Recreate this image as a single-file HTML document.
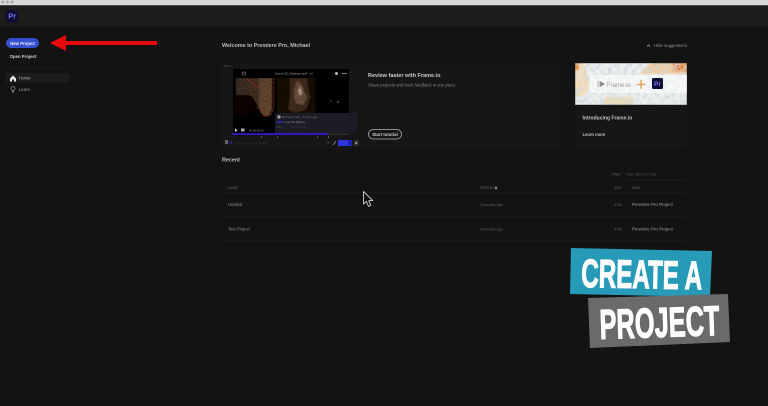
<!DOCTYPE html>
<html><head><meta charset="utf-8"><title>Premiere Pro</title>
<style>
html,body{margin:0;padding:0;background:#131313;width:768px;height:406px;overflow:hidden}
svg{display:block;position:absolute;left:0;top:0}
text{font-family:"Liberation Sans",sans-serif}
</style></head><body>
<svg width="768" height="406" viewBox="0 0 768 406" xmlns="http://www.w3.org/2000/svg">
<defs>
<filter id="b" x="-2%" y="-2%" width="104%" height="104%"><feGaussianBlur stdDeviation="0.28"/></filter>
<filter id="tex" x="0" y="0" width="100%" height="100%">
<feTurbulence type="fractalNoise" baseFrequency="0.6" numOctaves="2" seed="4" result="n"/>
<feColorMatrix in="n" type="matrix" values="0 0 0 0 0  0 0 0 0 0  0 0 0 0 0  1.200 0 0 0 -0.350" result="m"/>
<feComposite in="m" in2="SourceGraphic" operator="in" result="c"/>
<feMerge><feMergeNode in="SourceGraphic"/><feMergeNode in="c"/></feMerge>
<feGaussianBlur stdDeviation="0.5"/>
</filter>
<filter id="tex2" x="0" y="0" width="100%" height="100%">
<feTurbulence type="fractalNoise" baseFrequency="0.25" numOctaves="3" seed="9" result="n"/>
<feColorMatrix in="n" type="matrix" values="0 0 0 0 .62  0 0 0 0 .68  0 0 0 0 .7  2.200 0 0 0 -0.800" result="m"/>
<feComposite in="m" in2="SourceGraphic" operator="in" result="c"/>
<feMerge><feMergeNode in="SourceGraphic"/><feMergeNode in="c"/></feMerge>
<feGaussianBlur stdDeviation="0.4"/>
</filter>
</defs>
<rect width="768" height="406" fill="#131313"/>
<g filter="url(#b)">
<rect width="768" height="5" fill="#d9d9d9"/>
<rect y="5" width="768" height="1" fill="#4a4a4a"/>
<circle cx="3" cy="2" r="1.400" fill="#a5a5a5"/><circle cx="7.500" cy="2" r="1.400" fill="#a5a5a5"/><circle cx="12" cy="2" r="1.400" fill="#a5a5a5"/>
<rect y="6" width="768" height="20" fill="#1b1b1b"/>
<rect x="6" y="10" width="12" height="12" rx="2" fill="#0a0938"/>
<text x="8.300" y="18.700" font-size="7.500" font-weight="bold" fill="#7478e0">Pr</text>

<rect x="6" y="38" width="33" height="10" rx="5" fill="#3550cf"/>
<text x="22.500" y="45" font-size="4.300" font-weight="bold" fill="#f0f0f6" text-anchor="middle">New Project</text>
<text x="23" y="58" font-size="4.300" font-weight="bold" fill="#d2d2d2" text-anchor="middle">Open Project</text>
<rect x="6" y="67" width="64" height="0.600" fill="#202020"/>
<rect x="6" y="73" width="64" height="10" rx="2" fill="#1d1d1d"/>
<path d="M10 78.500 13 75.500l3 3V81.500H14V79.500H12V81.500H10Z" fill="#e6e6e6"/>
<text x="19" y="79.500" font-size="4.300" fill="#b4b4b4">Home</text>
<circle cx="13" cy="88.500" r="2" fill="none" stroke="#888" stroke-width=".8"/>
<rect x="12" y="91" width="2" height="1.500" fill="#888"/>
<text x="19" y="91" font-size="4.300" fill="#a0a0a0">Learn</text>

<text x="222" y="47" font-size="5.400" font-weight="bold" fill="#bcbcbc">Welcome to Premiere Pro, Michael</text>
<path d="M647 46.500 648.500 45 650 46.500" fill="none" stroke="#a0a0a0" stroke-width=".8"/>
<text x="654" y="47" font-size="4.300" fill="#909090">Hide suggestions</text>

<!-- card 1 -->
<rect x="222" y="63" width="338" height="85" fill="#171717"/>
<rect x="233" y="69" width="116" height="65" fill="#050505"/>
<text x="224" y="67" font-size="2.500" fill="#666">Home</text>
<text x="275" y="74.500" font-size="3" fill="#a8a8a8">Scene 02_Desktop.mp4 · v2</text>
<circle cx="336.500" cy="73.500" r="1.500" fill="#b8b8b8"/>
<rect x="342" y="73" width="5" height="1" fill="#808080"/>
<circle cx="244" cy="73.500" r="1.600" fill="none" stroke="#909090" stroke-width=".6"/>

<g filter="url(#tex)">
<rect x="234" y="78" width="115" height="56" fill="#0c0906"/>
<rect x="236" y="78" width="22" height="17" fill="#43362a"/>
<rect x="250" y="78" width="14" height="30" fill="#4a3627"/>
<path d="M259 78h13v28q-1 10-6 10t-7-10Z" fill="#6a4e39"/>
<path d="M234 96h18l6 10-8 8h-16Z" fill="#14100b"/>
<path d="M277 78h38v36h-38Z" fill="#1c140d"/>
<path d="M290 78h17l1 8 2 12-4 12-12 3-6-4q2-10 2-18Z" fill="#443120"/>
<path d="M298 81q5 3 6 10l3 7-4 7-6-1q-4-5-3-13 1-7 4-10Z" fill="#715642"/>
<path d="M300 86q2 4 2 8l-2 2-2-5Z" fill="#bda795"/>
<rect x="334" y="78" width="15" height="36" fill="#090806"/>
</g>
<path d="M247 79l11 9" stroke="#a02a24" stroke-width="1" stroke-dasharray="1.500 .6"/>
<path d="M274 78v26q-1 12-7 12t-7-10" fill="none" stroke="#8c3026" stroke-width=".8" stroke-dasharray="2 .7"/>
<circle cx="338" cy="102" r="1.300" fill="#3c3c38"/><circle cx="331" cy="101" r="1" fill="#302f2c"/>

<rect x="275" y="113" width="82" height="20" fill="#1a1c25"/>
<circle cx="279" cy="117" r="1.700" fill="#a0a0a0"/>
<text x="282" y="118" font-size="2.800" fill="#787878">Michael Stuart · 3 hours ago</text>
<rect x="277" y="121" width="6" height="1.800" fill="#2b2ba8"/>
<text x="284" y="123" font-size="2.800" fill="#949494">Love this lighting</text>
<text x="277" y="128" font-size="2.500" fill="#505050">Reply</text>
<text x="291" y="128" font-size="2.500" fill="#444">Add to thought</text>
<path d="M235 128.500v3.500l2.500-1.800Z" fill="#ddd"/>
<rect x="241" y="128.500" width="3.500" height="3" fill="#aaa"/>
<text x="249" y="131.500" font-size="2.800" fill="#969696">00:00:00:00</text>
<rect x="232" y="133" width="96" height="2" fill="#2e19bd"/>
<rect x="328" y="133.500" width="21" height="1" fill="#444"/>
<rect x="261" y="136" width="1" height="2" fill="#555"/><rect x="277" y="136" width="1" height="2" fill="#555"/><rect x="317" y="136" width="1" height="2" fill="#555"/><rect x="328" y="136" width="1" height="2" fill="#666"/>
<rect x="225" y="140" width="3" height="4" fill="#666"/>
<circle cx="231" cy="142.500" r="1.300" fill="#2c28b0"/>
<text x="235" y="144" font-size="2.800" fill="#363636">Leave your comment here</text>
<circle cx="328" cy="142.500" r="1.800" fill="#2a2a2a"/>
<path d="M333 145l3-4" stroke="#888" stroke-width=".8"/>
<rect x="338" y="140" width="14" height="6" fill="#2d35e0"/>
<rect x="348" y="140.500" width="4" height="5" fill="#1c22a8"/>
<rect x="354" y="140" width="5" height="6" fill="#2c2c2c"/>
<path d="M355.500 141.500v3l2-1.500Z" fill="#ccc"/>

<text x="368" y="77" font-size="5.500" font-weight="bold" fill="#cdcdcd">Review faster with Frame.io</text>
<text x="368" y="86.500" font-size="4.200" fill="#848484">Share projects and track feedback in one place</text>
<rect x="368.500" y="129.500" width="33" height="9.500" rx="4.700" fill="none" stroke="#b4b4b4" stroke-width=".8"/>
<text x="385" y="136" font-size="4.300" font-weight="bold" fill="#d0d0d0" text-anchor="middle">Start tutorial</text>

<!-- card 2 -->
<rect x="575" y="63" width="112" height="85" fill="#171717"/>
<g filter="url(#tex2)">
<rect x="575" y="63" width="112" height="42" fill="#eef1f1"/>
<path d="M575 63h8q6 8 6 20t-8 13h-6Z" fill="#f8dfb6"/>
<rect x="575" y="63" width="4" height="7" fill="#e5953e"/>
<path d="M652 63h35v11h-47q6-8 12-11Z" fill="#f3cd9a"/>
<path d="M672 63h15v9h-15Z" fill="#e8a05a"/>
<path d="M605 97h28v8h-30Z" fill="#ecdcb8"/>
</g>
<rect x="590" y="75" width="97" height="18" fill="#fff" opacity=".55"/>
<circle cx="678" cy="66" r=".8" fill="#c83a22"/><circle cx="682" cy="67" r=".8" fill="#c83a22"/><circle cx="679" cy="69" r=".7" fill="#c83a22"/>
<path d="M598 81v6M600 81.500v5l4.500-2.500Z" fill="#8a8a8a" stroke="#8a8a8a" stroke-width=".7"/>
<text x="607" y="87" font-size="6" fill="#999">Frame.io</text>
<path d="M637 84.500h8M641 80v9" stroke="#e69a3c" stroke-width="1.200"/>
<rect x="652" y="78" width="11" height="11" rx="1.500" fill="#0a0938"/>
<text x="654" y="86" font-size="6.500" font-weight="bold" fill="#7d81e8">Pr</text>
<text x="582.500" y="119.500" font-size="5" font-weight="bold" fill="#c0c0c0">Introducing Frame.io</text>
<text x="582.500" y="136" font-size="4.200" font-weight="bold" fill="#c0c0c0">Learn more</text>

<!-- recent -->
<text x="222" y="161.500" font-size="5.400" font-weight="bold" fill="#c0c0c0">Recent</text>
<text x="612" y="175.500" font-size="3.800" fill="#626262">Filter</text>
<text x="626" y="175.500" font-size="3.800" fill="#525252">Filter Recent Files</text>
<rect x="625" y="179" width="61" height=".6" fill="#262626"/>
<text x="228" y="189" font-size="3.500" fill="#606060">NAME</text>
<text x="480" y="189" font-size="3.500" fill="#606060">RECENT</text>
<path d="M496 186v3M494.800 187.500l1.200 1.800 1.200-1.800" stroke="#a0a0a0" stroke-width=".7" fill="#a0a0a0"/>
<text x="614" y="189" font-size="3.500" fill="#606060">SIZE</text>
<text x="632" y="189" font-size="3.500" fill="#606060">KIND</text>
<rect x="222" y="192" width="465" height=".6" fill="#1e1e1e"/>
<text x="228" y="206" font-size="4.200" fill="#8e8e8e">Untitled</text>
<text x="480" y="206" font-size="3.600" fill="#626262">3 minutes ago</text>
<text x="614" y="206" font-size="3.600" fill="#626262">4 KB</text>
<text x="632" y="206" font-size="4.400" fill="#a0a0a0">Premiere Pro Project</text>
<rect x="222" y="216" width="465" height=".6" fill="#1e1e1e"/>
<text x="228" y="230.500" font-size="4.200" fill="#8e8e8e">Test Project</text>
<text x="480" y="230.500" font-size="3.600" fill="#626262">4 minutes ago</text>
<text x="614" y="230.500" font-size="3.600" fill="#626262">4 KB</text>
<text x="632" y="230.500" font-size="4.400" fill="#a0a0a0">Premiere Pro Project</text>
<rect x="222" y="240" width="465" height=".6" fill="#1e1e1e"/>
</g>

<!-- arrow -->
<path d="M50 43 66 35V41H157V45H66V51Z" fill="#e8090c"/>
<!-- cursor -->
<path d="M363.500 191.500V204l3-2.600 2 5 2.300-1-2-4.800h4Z" fill="#111" stroke="#d0d0d0" stroke-width=".9" stroke-linejoin="round"/>

<!-- banner -->
<polygon points="571,248 712,251 710,297 570,294" fill="#279ab8"/>
<polygon points="588,298 728,294 730,342 590,348" fill="#6a6a6a"/>
<text transform="translate(581 287) rotate(1.100)" font-size="40" font-weight="bold" fill="#fff" stroke="#fff" stroke-width="1.100" textLength="121" lengthAdjust="spacingAndGlyphs">CREATE A</text>
<text transform="translate(600 339) rotate(-1.900)" font-size="42" font-weight="bold" fill="#fff" stroke="#fff" stroke-width="1.100" textLength="120" lengthAdjust="spacingAndGlyphs">PROJECT</text>
</svg>
</body></html>
